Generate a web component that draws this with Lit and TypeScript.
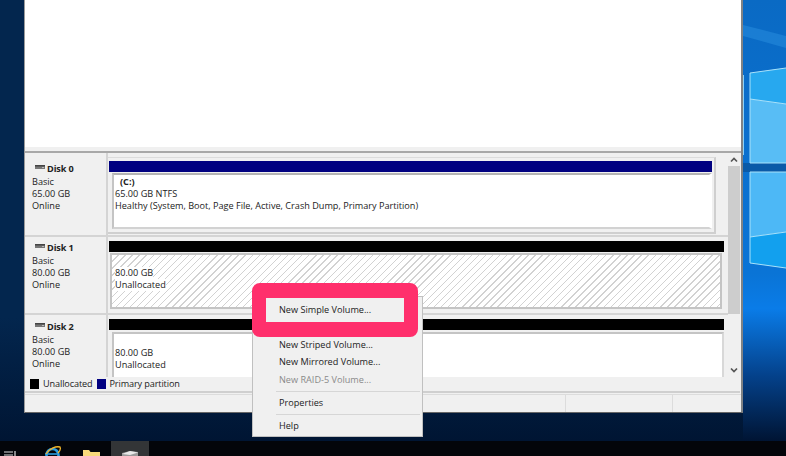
import { LitElement, html, css } from "lit";
import { customElement } from "lit/decorators.js";

@customElement("app-root")
export class AppRoot extends LitElement {
  static styles = css`
    :host { display: block; width: 786px; height: 456px; position: relative; overflow: hidden;
      font-family: "Open Sans", "Noto Sans", sans-serif; font-size: 9.15px; color: #222; line-height: 12px; }
    .wall { position: absolute; left: 0; top: 0; display: block; }
    .win { position: absolute; left: 24px; top: 0; width: 719px; height: 413px; box-sizing: border-box;
      border-left: 1px solid #9a9a9a; border-right: 2px solid #7f8285; border-bottom: 1px solid #666;
      background: #f0f0f0; display: flex; flex-direction: column; }
    .top { height: 147px; background: #fff; flex: none; }
    .gap { height: 4px; flex: none; }
    .rule { height: 2px; background: #a8a8a8; flex: none; width: 716px; }
    .mid { height: 224px; display: flex; flex: none; }
    .disks { flex: 1; display: flex; flex-direction: column; min-width: 0; }
    .row { display: flex; flex: none; border-bottom: 2px solid #d4d4d4; box-sizing: border-box; }
    .r0 { height: 84px; } .r1 { height: 78px; } .r2 { height: 62px; border-bottom: 0; }
    .label { width: 83px; flex: none; box-sizing: border-box; padding-left: 7px; border-right: 2px solid #d4d4d4; }
    .r0 .label { padding-top: 10px; } .r1 .label { padding-top: 5px; } .r2 .label { padding-top: 6px; }
    .name { font-weight: 700; display: flex; align-items: flex-start; gap: 2px; margin-left: 3px; height: 13px; letter-spacing: -0.1px; }
    .name svg { display: block; margin-top: 2px; }
    .vol { flex: 1; min-width: 0; padding-top: 4px; }
    .frame { width: 608px; height: 77px; box-sizing: border-box; padding-top: 3px;
      border: 1px solid #dcdcdc; border-left-width: 0; border-right: 2px solid #cfcfcf; border-bottom: 2px solid #cfcfcf; }
    .blue { background: #000080; height: 11px; width: 603px; margin-left: 1px; }
    .b0 { width: 600px; height: 56px; margin: 1px 0 0 4px; box-sizing: border-box; background: #fff; padding: 1px 0 0 1px;
      border-top: 2px solid #b4b4b4; border-left: 2px solid #c4c4c4; border-right: 3px solid #fff; border-bottom: 2px solid #d2d2d2; }
    .c { font-weight: 700; padding-left: 5px; }
    .bar { height: 11px; background: #000; width: 615px; margin-left: 1px; }
    .hatch { width: 612px; height: 56px; margin: 1px 0 0 2px; box-sizing: border-box; border: 2px solid #c4c4c4; padding: 12px 0 0 3px;
      background: repeating-linear-gradient(135deg, #fff 0 4px, #d2d2d2 4px 5px); }
    .t { background: #fff; width: max-content; }
    .plain { width: 612px; height: 45px; margin: 2px 0 0 4px; box-sizing: border-box; background: #fff;
      border-top: 2px solid #c4c4c4; border-left: 2px solid #c4c4c4; border-right: 2px solid #d8d8d8; padding: 13px 0 0 1px; }
    .sb { width: 12px; flex: none; margin-right: 1px; display: flex; flex-direction: column; }
    .sb svg { display: block; }
    .arrow { height: 13px; flex: none; }
    .thumb { height: 148px; background: #cdcdcd; flex: none; }
    .sp { flex: 1; }
    .legend { height: 14px; flex: none; width: 715px; display: flex; align-items: center; padding-left: 5px; box-sizing: border-box; letter-spacing: -0.12px; }
    .sw { width: 9px; height: 10px; flex: none; margin-right: 4px; }
    .lt { margin-right: 4px; }
    .rule2 { height: 2px; flex: none; width: 715px; background: #cfcfcf; }
    .status { flex: 1; display: flex; border-top: 1px solid #dcdcdc; margin-top: 1px; }
    .s1 { width: 540px; border-right: 1px solid #dcdcdc; }
    .s2 { width: 106px; border-right: 1px solid #dcdcdc; }
    .task { position: absolute; left: 0; right: 0; top: 441px; height: 15px; background: #03050a; overflow: hidden; }
    .tile { position: absolute; left: 111px; top: 0; width: 38px; height: 15px; background: #333537; }
    .ticon { position: absolute; top: 0; }
    .menu { position: absolute; left: 252px; top: 296px; width: 171px; height: 141px; box-sizing: border-box;
      background: #f0f0f0; border: 1px solid #c0c0c0; padding: 3.5px 0 0 26px; }
    .mi { height: 17.5px; line-height: 17px; white-space: nowrap; }
    .dis { color: #8a8a8a; }
    .sep { height: 1px; background: #d6d6d6; margin: 3px 2px 2px -3px; }
    .sep.b { margin-top: 2.5px; }
    .hl { position: absolute; left: 252px; top: 283px; width: 166px; height: 54px; box-sizing: border-box;
      border: solid #ff2f6c; border-width: 15px 14px; border-radius: 8px; }
  `;

  private diskIcon() {
    return html`<svg width="10" height="5" viewBox="0 0 10 5"><rect width="10" height="4" fill="#777"/><rect width="10" height="1.5" fill="#444"/><rect x="7" y="2" width="2" height="1" fill="#bbb"/></svg>`;
  }

  private label(name: string, size: string) {
    return html`<div class="label">
      <div class="name">${this.diskIcon()}<span>${name}</span></div>
      <div>Basic</div><div>${size}</div><div>Online</div>
    </div>`;
  }

  render() {
    return html`
      <svg class="wall" width="786" height="441" viewBox="0 0 786 441">
        <defs>
          <linearGradient id="dl" x1="0" y1="0" x2="0" y2="1">
            <stop offset="0" stop-color="#03264e"/><stop offset=".72" stop-color="#03264e"/><stop offset="1" stop-color="#001533"/>
          </linearGradient>
          <linearGradient id="dr" x1="0" y1="0" x2="0" y2="1">
            <stop offset="0" stop-color="#0a6ac4"/><stop offset=".62" stop-color="#0a74d6"/><stop offset=".7" stop-color="#0a7ce8"/>
            <stop offset=".85" stop-color="#04428c"/><stop offset="1" stop-color="#001433"/>
          </linearGradient>
        </defs>
        <rect width="786" height="441" fill="url(#dl)"/>
        <rect x="743" width="43" height="441" fill="url(#dr)"/>
        <path d="M743 25 L786 36 L786 48 L743 36Z" fill="#2a8fe0" opacity=".5"/>
        <rect x="743" y="163" width="43" height="9" fill="#0a5aa8"/>
        <path d="M750 73 L786 68 L786 104 L750 99Z" fill="#27a8ef"/>
        <path d="M750 99 L786 104 L786 163 L750 163Z" fill="#58bdf5"/>
        <path d="M750 172 L786 172 L786 232 L750 237Z" fill="#4db8f6"/>
        <path d="M750 237 L786 232 L786 268 L750 263Z" fill="#12a0ee"/>
        <path d="M750 73 L786 68 M750 73 V163 H786 M750 99 L786 104 M750 172 H786 M750 172 V263 L786 268 M750 237 L786 232" fill="none" stroke="#a9e2fa" stroke-width="1"/>
        <path d="M743.5 75 V155" stroke="#8ed2f6" stroke-width="1"/>
      </svg>
      <div class="win">
        <div class="top"></div>
        <div class="gap"></div>
        <div class="rule"></div>
        <div class="mid">
          <div class="disks">
            <div class="row r0">
              ${this.label("Disk 0", "65.00 GB")}
              <div class="vol"><div class="frame">
                <div class="blue"></div>
                <div class="b0">
                  <div class="c">(C:)</div>
                  <div>65.00 GB NTFS</div>
                  <div>Healthy (System, Boot, Page File, Active, Crash Dump, Primary Partition)</div>
                </div>
              </div></div>
            </div>
            <div class="row r1">
              ${this.label("Disk 1", "80.00 GB")}
              <div class="vol">
                <div class="bar"></div>
                <div class="hatch"><div class="t">80.00 GB</div><div class="t">Unallocated</div></div>
              </div>
            </div>
            <div class="row r2">
              ${this.label("Disk 2", "80.00 GB")}
              <div class="vol">
                <div class="bar"></div>
                <div class="plain"><div>80.00 GB</div><div>Unallocated</div></div>
              </div>
            </div>
          </div>
          <div class="sb">
            <div class="arrow"><svg width="12" height="13" viewBox="0 0 12 13"><path d="M3 8.5 L6 5.5 L9 8.5" fill="none" stroke="#555" stroke-width="1.7"/></svg></div>
            <div class="thumb"></div>
            <div class="sp"></div>
            <div class="arrow"><svg width="12" height="13" viewBox="0 0 12 13"><path d="M3 4.5 L6 7.5 L9 4.5" fill="none" stroke="#555" stroke-width="1.7"/></svg></div>
          </div>
        </div>
        <div class="legend">
          <div class="sw" style="background:#000"></div><span class="lt">Unallocated</span>
          <div class="sw" style="background:#000080"></div><span>Primary partition</span>
        </div>
        <div class="rule2"></div>
        <div class="status"><div class="s1"></div><div class="s2"></div></div>
      </div>
      <div class="task">
        <svg class="ticon" style="left:4px" width="14" height="15" viewBox="0 0 14 15"><path d="M0 11h9M0 14h9" stroke="#ddd" stroke-width="1.2"/><path d="M11 10v5" stroke="#ddd" stroke-width="1.2"/></svg>
        <svg class="ticon" style="left:44px" width="18" height="15" viewBox="0 0 18 15"><circle cx="8.5" cy="14" r="6" fill="none" stroke="#2a9be0" stroke-width="2.6"/><path d="M1 13h12" stroke="#2a9be0" stroke-width="1.6"/><path d="M2 13 C6 7 12 5 16 6 C17 8 15 11 14 12" fill="none" stroke="#f0b429" stroke-width="1.3"/></svg>
        <svg class="ticon" style="left:83px" width="17" height="15" viewBox="0 0 17 15"><path d="M0 9 h6 l1.5 2 h9.5 v4 h-17z" fill="#f8d97c"/></svg>
        <div class="tile"></div>
        <svg class="ticon" style="left:121px" width="18" height="15" viewBox="0 0 18 15"><path d="M1 12 L9 10 L17 11 L17 15 L1 15z" fill="#9a9a9a"/><path d="M1 13 L9 10 L17 11.5 L9 14z" fill="#e8e8e8"/></svg>
      </div>
      <div class="menu">
        <div class="mi">New Simple Volume...</div>
        <div class="mi dis">New Spanned Volume...</div>
        <div class="mi">New Striped Volume...</div>
        <div class="mi">New Mirrored Volume...</div>
        <div class="mi dis">New RAID-5 Volume...</div>
        <div class="sep"></div>
        <div class="mi">Properties</div>
        <div class="sep b"></div>
        <div class="mi">Help</div>
      </div>
      <div class="hl"></div>
    `;
  }
}
